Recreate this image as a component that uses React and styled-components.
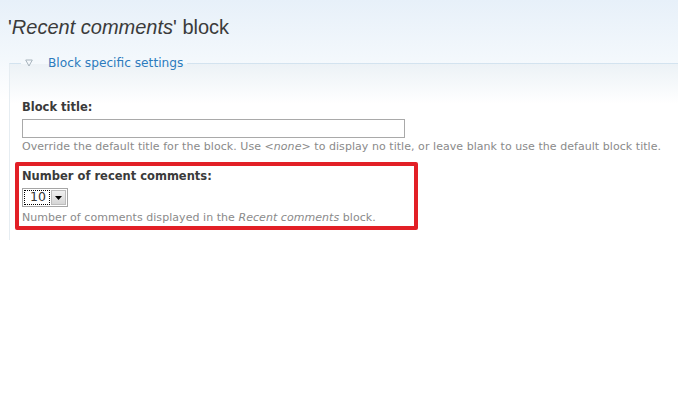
import styled, { createGlobalStyle } from "styled-components";

const GlobalStyle = createGlobalStyle`
  html, body {
    margin: 0;
    padding: 0;
    background: linear-gradient(#e7f0f9 0px, #f3f8fc 58px, #ffffff 100px) no-repeat;
    background-color: #fff;
    min-height: 400px;
  }
`;

const Page = styled.div`
  padding: 15px 0 0 9px;
  font-family: "DejaVu Sans", Verdana, sans-serif;
  color: #494949;
`;

const Title = styled.h2`
  margin: 0 0 17px -1px;
  font-family: "Liberation Sans", Arial, sans-serif;
  font-weight: normal;
  font-size: 20px;
  line-height: 24px;
  color: #3b3b3b;
  em {
    font-style: italic;
  }
`;

const Fieldset = styled.fieldset`
  margin: 0;
  padding: 30px 0 10px 12px;
  border: none;
  border-top: 1px solid #d3e3ef;
  border-left: 1px solid #e6edf2;
  background: linear-gradient(#ecf2f6, #ffffff 40px);
  min-height: 180px;
  box-sizing: border-box;
`;

const Legend = styled.legend`
  margin-left: -1px;
  padding: 0 4px;
  display: flex;
  align-items: center;
  gap: 15px;
  font-size: 12.2px;
  line-height: 14px;
  color: #2c7bbd;
`;

const Arrow = styled.svg`
  width: 8px;
  height: 8px;
  display: block;
`;

const FormItem = styled.div`
  margin-bottom: ${(p) => p.$gap || 0}px;
`;

const Label = styled.label`
  display: block;
  font-weight: bold;
  font-size: 11.5px;
  line-height: 14px;
  color: #3a3a3a;
  margin-bottom: 5px;
`;

const TextInput = styled.div`
  width: 383px;
  height: 19px;
  box-sizing: border-box;
  border: 1px solid #a9a9a9;
  background: #fff;
`;

const Description = styled.div`
  font-size: 11px;
  line-height: 13px;
  color: #8a8a8a;
  margin-top: ${(p) => p.$top || 2}px;
  letter-spacing: 0.05px;
  em {
    font-style: italic;
  }
`;

const Highlight = styled.div`
  margin-left: -7px;
  width: 403px;
  box-sizing: border-box;
  border: 4px solid #e21f26;
  border-radius: 2px;
  padding: 3px 0 2px 3px;
`;

const Select = styled.div`
  display: inline-flex;
  align-items: stretch;
  height: 19px;
  width: 46px;
  box-sizing: border-box;
  border: 1px solid #a5a5a5;
  background: #fff;
  padding: 1px;
  gap: 1px;
  vertical-align: top;
`;

const SelectValue = styled.div`
  flex: 1;
  box-sizing: border-box;
  border: 1px dotted #000;
  padding: 0 0 0 5px;
  display: flex;
  align-items: center;
  font-family: "DejaVu Sans", Tahoma, sans-serif;
  font-size: 12.5px;
  line-height: 1;
  color: #333;
`;

const SelectButton = styled.div`
  width: 15px;
  background: linear-gradient(#f0f0f0, #d6d6d6);
  border: 1px solid #bdbdbd;
  box-sizing: border-box;
  display: flex;
  align-items: center;
  justify-content: center;
`;

const SelectRow = styled.div`
  height: 19px;
`;

export default function App() {
  return (
    <>
      <GlobalStyle />
      <Page>
        <Title>
          '<em>Recent comments</em>' block
        </Title>
        <Fieldset>
          <Legend>
            <Arrow viewBox="0 0 8 8">
              <path d="M0.7 1 L7.3 1 L4 7 Z" fill="none" stroke="#a8b4bd" strokeWidth="1" />
            </Arrow>
            Block specific settings
          </Legend>
          <FormItem $gap={9}>
            <Label>Block title:</Label>
            <TextInput />
            <Description>
              Override the default title for the block. Use <em>&lt;none&gt;</em> to display no title, or leave blank to use the default block title.
            </Description>
          </FormItem>
          <Highlight>
            <Label>Number of recent comments:</Label>
            <SelectRow>
              <Select>
                <SelectValue>10</SelectValue>
                <SelectButton>
                  <svg width="7" height="4" viewBox="0 0 7 4">
                    <path d="M0 0 H7 L3.5 4 Z" fill="#000" />
                  </svg>
                </SelectButton>
              </Select>
            </SelectRow>
            <Description $top={4}>
              Number of comments displayed in the <em>Recent comments</em> block.
            </Description>
          </Highlight>
        </Fieldset>
      </Page>
    </>
  );
}
